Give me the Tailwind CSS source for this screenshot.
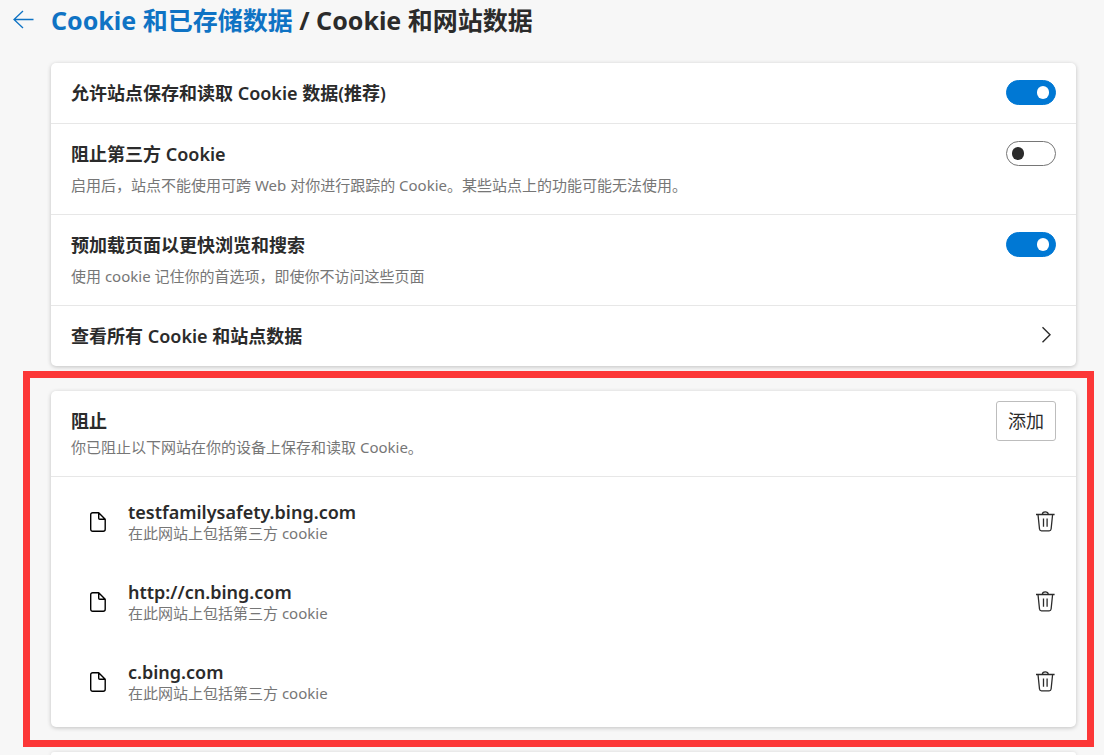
<!DOCTYPE html>
<html lang="zh-CN">
<head>
    <meta charset="UTF-8">
    <meta name="viewport" content="width=device-width, initial-scale=1.0">
    <title>Cookie 和网站数据</title>
    <script src="https://cdn.jsdelivr.net/npm/@tailwindcss/browser@4"></script>
</head>
<body class="flex flex-col min-h-screen bg-[#f7f7f7] text-[#2b2b2b] font-['Noto_Sans','Noto_Sans_CJK_SC',sans-serif]">
    <!-- Header -->
    <header class="flex items-center h-10 pl-3 gap-4">
        <button type="button" aria-label="返回" class="text-[#0f73c4]">
            <svg class="w-[23px] h-5" viewBox="0 0 23 20" fill="none" stroke="currentColor" stroke-width="1.3">
                <path d="M21.5 9.5H1.8M11 1L2 9.5L11 18"/>
            </svg>
        </button>
        <h1 class="text-[25px] leading-8 font-bold whitespace-nowrap">
            <a href="#" class="text-[#0f73c4]">Cookie 和已存储数据</a> / Cookie 和网站数据
        </h1>
    </header>

    <main class="flex-1 flex flex-col gap-[25px] mt-[23px] ml-[51px] mr-7">
        <!-- Settings -->
        <section class="bg-white rounded-[5px] shadow-[0_1px_4px_rgba(0,0,0,0.22)] divide-y divide-[#e7e7e7]">
            <div class="flex items-start justify-between px-5 py-[18px]">
                <label for="allowCookies" class="text-lg leading-6 font-semibold">允许站点保存和读取 Cookie 数据(推荐)</label>
                <input type="checkbox" id="allowCookies" checked
                       class="appearance-none shrink-0 flex items-center -my-px w-[50px] h-[25px] pl-[5px] pr-1.5 rounded-full border border-[#767676] before:w-3 before:h-[13px] before:rounded-full before:bg-[#2b2b2b] checked:justify-end checked:bg-[#0078d4] checked:border-[#0078d4] checked:before:bg-white">
            </div>
            <div class="flex items-start justify-between px-5 py-[18px]">
                <div>
                    <label for="blockThirdParty" class="block text-lg leading-6 font-semibold">阻止第三方 Cookie</label>
                    <p class="mt-2.5 pb-0.5 text-[15px] leading-[18px] text-[#767676]">启用后，站点不能使用可跨 Web 对你进行跟踪的 Cookie。某些站点上的功能可能无法使用。</p>
                </div>
                <input type="checkbox" id="blockThirdParty"
                       class="appearance-none shrink-0 flex items-center -my-px w-[50px] h-[25px] pl-[5px] pr-1.5 rounded-full border border-[#767676] before:w-3 before:h-[13px] before:rounded-full before:bg-[#2b2b2b] checked:justify-end checked:bg-[#0078d4] checked:border-[#0078d4] checked:before:bg-white">
            </div>
            <div class="flex items-start justify-between px-5 py-[18px]">
                <div>
                    <label for="preloadPages" class="block text-lg leading-6 font-semibold">预加载页面以更快浏览和搜索</label>
                    <p class="mt-2.5 pb-0.5 text-[15px] leading-[18px] text-[#767676]">使用 cookie 记住你的首选项，即使你不访问这些页面</p>
                </div>
                <input type="checkbox" id="preloadPages" checked
                       class="appearance-none shrink-0 flex items-center -my-px w-[50px] h-[25px] pl-[5px] pr-1.5 rounded-full border border-[#767676] before:w-3 before:h-[13px] before:rounded-full before:bg-[#2b2b2b] checked:justify-end checked:bg-[#0078d4] checked:border-[#0078d4] checked:before:bg-white">
            </div>
            <a href="#" class="flex items-center justify-between px-5 py-[18px]">
                <span class="text-lg leading-6 font-semibold">查看所有 Cookie 和站点数据</span>
                <svg class="w-5 h-5" viewBox="0 0 20 20" fill="none" stroke="currentColor" stroke-width="1.4">
                    <path d="M6.5 1.2L14 8.7L6.5 16.2"/>
                </svg>
            </a>
        </section>

        <!-- Blocked sites -->
        <section class="relative bg-white rounded-[5px] shadow-[0_1px_4px_rgba(0,0,0,0.22)]">
            <div class="absolute -top-5 -bottom-5 -left-7 -right-[18px] border-[7px] border-[#fc3737] pointer-events-none"></div>
            <div class="flex items-start justify-between px-5 border-b border-[#e7e7e7]">
                <div class="py-[18px]">
                    <h2 class="text-lg leading-6 font-semibold">阻止</h2>
                    <p class="mt-[5px] pb-0.5 text-[15px] leading-[18px] text-[#767676]">你已阻止以下网站在你的设备上保存和读取 Cookie。</p>
                </div>
                <button type="button" class="mt-2.5 w-15 h-10 border border-[#bdbdbd] rounded-[3px] bg-white text-lg leading-6">添加</button>
            </div>
            <ul class="py-[5px]">
                <li class="flex items-center h-20 pl-[38px] pr-5">
                    <svg class="w-[18px] h-[22px] text-black" viewBox="0 0 18 22" fill="none" stroke="currentColor" stroke-width="1.4" stroke-linejoin="round">
                        <path d="M3.7 1.7H9.7L16.2 8.2V18.3A2 2 0 0 1 14.2 20.3H3.7A2 2 0 0 1 1.7 18.3V3.7A2 2 0 0 1 3.7 1.7ZM9.7 1.7V7.2A1 1 0 0 0 10.7 8.2H16.2"/>
                    </svg>
                    <div class="flex-1 ml-[21px]">
                        <h3 class="text-lg leading-6 font-semibold">testfamilysafety.bing.com</h3>
                        <p class="pb-0.5 text-[15px] leading-[18px] text-[#767676]">在此网站上包括第三方 cookie</p>
                    </div>
                    <button type="button" aria-label="删除 testfamilysafety.bing.com">
                        <svg class="w-5 h-[22px]" viewBox="0 0 20 22" fill="none" stroke="currentColor" stroke-width="1.3">
                            <path d="M0 3.5H18.6M6.3 3.5A3 2.7 0 0 1 12.3 3.5M2 3.5L3.5 18A2 2 0 0 0 5.5 19.8H13.1A2 2 0 0 0 15.1 18L16.6 3.5M7.5 7.5V15.7M11.1 7.5V15.7"/>
                        </svg>
                    </button>
                </li>
                <li class="flex items-center h-20 pl-[38px] pr-5">
                    <svg class="w-[18px] h-[22px] text-black" viewBox="0 0 18 22" fill="none" stroke="currentColor" stroke-width="1.4" stroke-linejoin="round">
                        <path d="M3.7 1.7H9.7L16.2 8.2V18.3A2 2 0 0 1 14.2 20.3H3.7A2 2 0 0 1 1.7 18.3V3.7A2 2 0 0 1 3.7 1.7ZM9.7 1.7V7.2A1 1 0 0 0 10.7 8.2H16.2"/>
                    </svg>
                    <div class="flex-1 ml-[21px]">
                        <h3 class="text-lg leading-6 font-semibold">http://cn.bing.com</h3>
                        <p class="pb-0.5 text-[15px] leading-[18px] text-[#767676]">在此网站上包括第三方 cookie</p>
                    </div>
                    <button type="button" aria-label="删除 http://cn.bing.com">
                        <svg class="w-5 h-[22px]" viewBox="0 0 20 22" fill="none" stroke="currentColor" stroke-width="1.3">
                            <path d="M0 3.5H18.6M6.3 3.5A3 2.7 0 0 1 12.3 3.5M2 3.5L3.5 18A2 2 0 0 0 5.5 19.8H13.1A2 2 0 0 0 15.1 18L16.6 3.5M7.5 7.5V15.7M11.1 7.5V15.7"/>
                        </svg>
                    </button>
                </li>
                <li class="flex items-center h-20 pl-[38px] pr-5">
                    <svg class="w-[18px] h-[22px] text-black" viewBox="0 0 18 22" fill="none" stroke="currentColor" stroke-width="1.4" stroke-linejoin="round">
                        <path d="M3.7 1.7H9.7L16.2 8.2V18.3A2 2 0 0 1 14.2 20.3H3.7A2 2 0 0 1 1.7 18.3V3.7A2 2 0 0 1 3.7 1.7ZM9.7 1.7V7.2A1 1 0 0 0 10.7 8.2H16.2"/>
                    </svg>
                    <div class="flex-1 ml-[21px]">
                        <h3 class="text-lg leading-6 font-semibold">c.bing.com</h3>
                        <p class="pb-0.5 text-[15px] leading-[18px] text-[#767676]">在此网站上包括第三方 cookie</p>
                    </div>
                    <button type="button" aria-label="删除 c.bing.com">
                        <svg class="w-5 h-[22px]" viewBox="0 0 20 22" fill="none" stroke="currentColor" stroke-width="1.3">
                            <path d="M0 3.5H18.6M6.3 3.5A3 2.7 0 0 1 12.3 3.5M2 3.5L3.5 18A2 2 0 0 0 5.5 19.8H13.1A2 2 0 0 0 15.1 18L16.6 3.5M7.5 7.5V15.7M11.1 7.5V15.7"/>
                        </svg>
                    </button>
                </li>
            </ul>
        </section>

        <!-- Next card -->
        <section class="flex-1 bg-white rounded-t-[5px] shadow-[0_1px_4px_rgba(0,0,0,0.22)]"></section>
    </main>
</body>
</html>
